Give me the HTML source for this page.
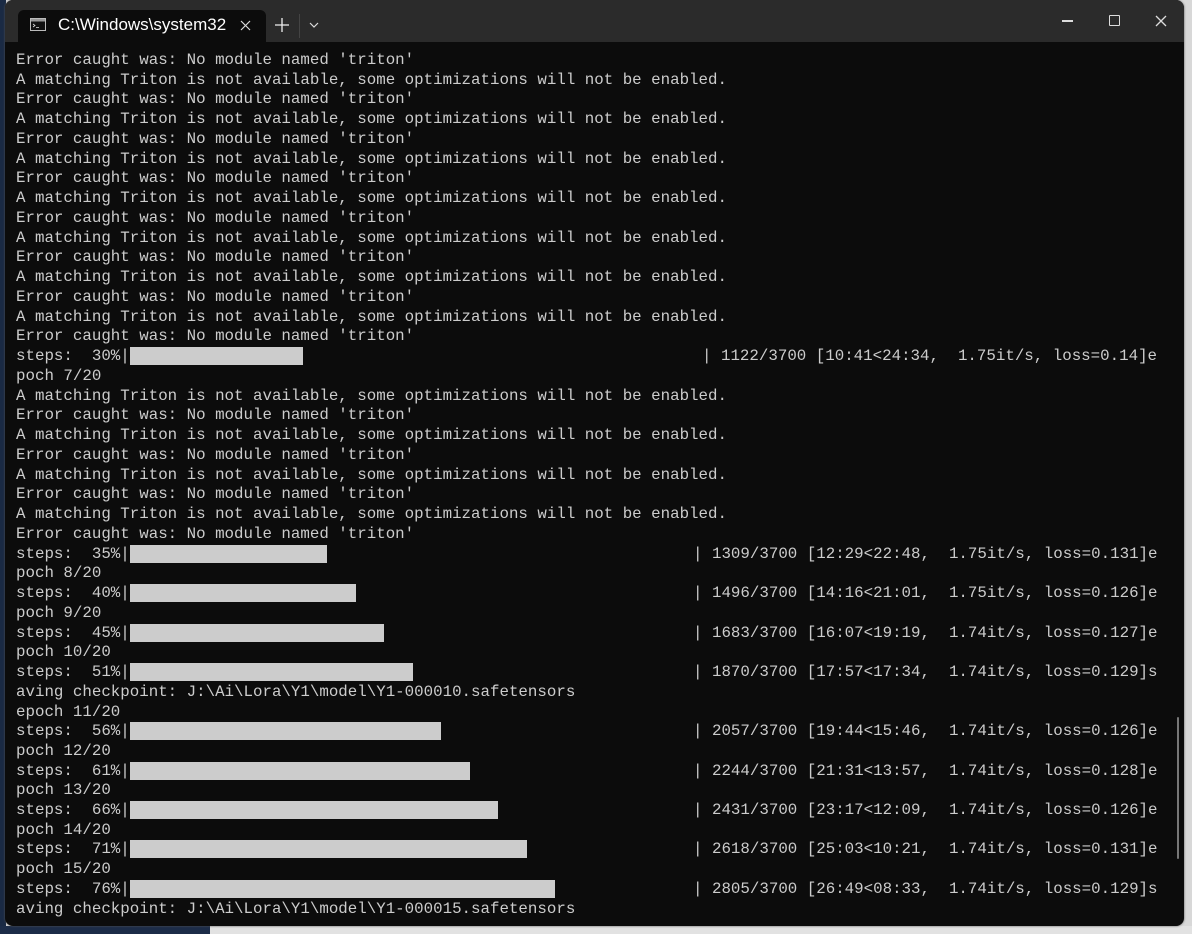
<!DOCTYPE html>
<html><head><meta charset="utf-8"><style>
html,body{margin:0;padding:0;width:1192px;height:934px;overflow:hidden;background:#d8d8d8;}
#bgb{position:absolute;left:0;top:0;width:6px;height:934px;background:#1a2a44;}
#bgbot{position:absolute;left:0;top:926px;width:210px;height:8px;background:#1c2c48;}
#bgbot2{position:absolute;left:210px;top:926px;width:990px;height:8px;background:#e2e2e2;}
#win{position:absolute;left:5px;top:0;width:1179px;height:926px;background:#0c0c0c;border-radius:8px;overflow:hidden;box-shadow:0 0 2px #555;}
#tb{position:absolute;left:0;top:0;width:100%;height:42px;background:#2b2b2b;}
#tab{position:absolute;left:13px;top:10px;width:248px;height:32px;background:#0c0c0c;border-radius:6px 6px 0 0;}
.t{position:absolute;font-family:"Liberation Sans",sans-serif;color:#fff;}
#lines{position:absolute;left:0;top:1px;}
.l{position:absolute;left:11px;font-family:"Liberation Mono",monospace;font-size:15.8px;color:#cccccc;white-space:pre;line-height:20px;}
.bar{position:absolute;left:125px;height:18px;background:#cccccc;}
</style></head><body>
<div id="bgb"></div><div id="bgbot"></div><div id="bgbot2"></div>
<div id="win">
<div id="tb">
 <div id="tab">
  <svg style="position:absolute;left:12px;top:8px" width="16" height="13"><rect x="0.5" y="0.5" width="15" height="12" fill="#111" stroke="#bbb"/><rect x="1" y="1" width="14" height="2.5" fill="#999"/><path d="M3 6l2 1.5-2 1.5M6 9.5h3" stroke="#ddd" fill="none" stroke-width="0.8"/></svg>
  <div class="t" style="left:40px;top:5px;font-size:17px;">C:\Windows\system32</div>
  <svg style="position:absolute;left:222px;top:10px" width="11" height="11"><path d="M1 1L10 10M10 1L1 10" stroke="#ddd" stroke-width="1.2"/></svg>
 </div>
 <svg style="position:absolute;left:270px;top:18px" width="14" height="14"><path d="M7 0V14M0 7H14" stroke="#eee" stroke-width="1.3"/></svg>
 <div style="position:absolute;left:294px;top:14px;width:1px;height:24px;background:#444"></div>
 <svg style="position:absolute;left:304px;top:22px" width="10" height="6"><path d="M1 1L5 5L9 1" stroke="#ddd" fill="none" stroke-width="1.2"/></svg>
 <div style="position:absolute;left:1057px;top:20px;width:11px;height:1.5px;background:#ddd"></div>
 <div style="position:absolute;left:1104px;top:15px;width:9px;height:9px;border:1.3px solid #ddd;border-radius:1px"></div>
 <svg style="position:absolute;left:1150px;top:15px" width="12" height="12"><path d="M1 1L11 11M11 1L1 11" stroke="#ddd" stroke-width="1.3"/></svg>
</div>
<div style="position:absolute;left:1172px;top:717px;width:2px;height:142px;background:#777;border-radius:1px"></div>
<div id="lines">
<div class="l" style="top:49px">Error caught was: No module named 'triton'</div>
<div class="l" style="top:69px">A matching Triton is not available, some optimizations will not be enabled.</div>
<div class="l" style="top:88px">Error caught was: No module named 'triton'</div>
<div class="l" style="top:108px">A matching Triton is not available, some optimizations will not be enabled.</div>
<div class="l" style="top:128px">Error caught was: No module named 'triton'</div>
<div class="l" style="top:148px">A matching Triton is not available, some optimizations will not be enabled.</div>
<div class="l" style="top:167px">Error caught was: No module named 'triton'</div>
<div class="l" style="top:187px">A matching Triton is not available, some optimizations will not be enabled.</div>
<div class="l" style="top:207px">Error caught was: No module named 'triton'</div>
<div class="l" style="top:227px">A matching Triton is not available, some optimizations will not be enabled.</div>
<div class="l" style="top:246px">Error caught was: No module named 'triton'</div>
<div class="l" style="top:266px">A matching Triton is not available, some optimizations will not be enabled.</div>
<div class="l" style="top:286px">Error caught was: No module named 'triton'</div>
<div class="l" style="top:306px">A matching Triton is not available, some optimizations will not be enabled.</div>
<div class="l" style="top:325px">Error caught was: No module named 'triton'</div>
<div class="l" style="top:345px">steps:  30%|</div><div class="bar" style="top:346px;width:173px"></div><div class="l" style="top:345px;left:697px">| 1122/3700 [10:41&lt;24:34,  1.75it/s, loss=0.14]e</div>
<div class="l" style="top:365px">poch 7/20</div>
<div class="l" style="top:385px">A matching Triton is not available, some optimizations will not be enabled.</div>
<div class="l" style="top:404px">Error caught was: No module named 'triton'</div>
<div class="l" style="top:424px">A matching Triton is not available, some optimizations will not be enabled.</div>
<div class="l" style="top:444px">Error caught was: No module named 'triton'</div>
<div class="l" style="top:464px">A matching Triton is not available, some optimizations will not be enabled.</div>
<div class="l" style="top:483px">Error caught was: No module named 'triton'</div>
<div class="l" style="top:503px">A matching Triton is not available, some optimizations will not be enabled.</div>
<div class="l" style="top:523px">Error caught was: No module named 'triton'</div>
<div class="l" style="top:543px">steps:  35%|</div><div class="bar" style="top:544px;width:197px"></div><div class="l" style="top:543px;left:688px">| 1309/3700 [12:29&lt;22:48,  1.75it/s, loss=0.131]e</div>
<div class="l" style="top:562px">poch 8/20</div>
<div class="l" style="top:582px">steps:  40%|</div><div class="bar" style="top:583px;width:226px"></div><div class="l" style="top:582px;left:688px">| 1496/3700 [14:16&lt;21:01,  1.75it/s, loss=0.126]e</div>
<div class="l" style="top:602px">poch 9/20</div>
<div class="l" style="top:622px">steps:  45%|</div><div class="bar" style="top:623px;width:254px"></div><div class="l" style="top:622px;left:688px">| 1683/3700 [16:07&lt;19:19,  1.74it/s, loss=0.127]e</div>
<div class="l" style="top:641px">poch 10/20</div>
<div class="l" style="top:661px">steps:  51%|</div><div class="bar" style="top:662px;width:283px"></div><div class="l" style="top:661px;left:688px">| 1870/3700 [17:57&lt;17:34,  1.74it/s, loss=0.129]s</div>
<div class="l" style="top:681px">aving checkpoint: J:\Ai\Lora\Y1\model\Y1-000010.safetensors</div>
<div class="l" style="top:701px">epoch 11/20</div>
<div class="l" style="top:720px">steps:  56%|</div><div class="bar" style="top:721px;width:311px"></div><div class="l" style="top:720px;left:688px">| 2057/3700 [19:44&lt;15:46,  1.74it/s, loss=0.126]e</div>
<div class="l" style="top:740px">poch 12/20</div>
<div class="l" style="top:760px">steps:  61%|</div><div class="bar" style="top:761px;width:340px"></div><div class="l" style="top:760px;left:688px">| 2244/3700 [21:31&lt;13:57,  1.74it/s, loss=0.128]e</div>
<div class="l" style="top:779px">poch 13/20</div>
<div class="l" style="top:799px">steps:  66%|</div><div class="bar" style="top:800px;width:368px"></div><div class="l" style="top:799px;left:688px">| 2431/3700 [23:17&lt;12:09,  1.74it/s, loss=0.126]e</div>
<div class="l" style="top:819px">poch 14/20</div>
<div class="l" style="top:838px">steps:  71%|</div><div class="bar" style="top:839px;width:397px"></div><div class="l" style="top:838px;left:688px">| 2618/3700 [25:03&lt;10:21,  1.74it/s, loss=0.131]e</div>
<div class="l" style="top:858px">poch 15/20</div>
<div class="l" style="top:878px">steps:  76%|</div><div class="bar" style="top:879px;width:425px"></div><div class="l" style="top:878px;left:688px">| 2805/3700 [26:49&lt;08:33,  1.74it/s, loss=0.129]s</div>
<div class="l" style="top:898px">aving checkpoint: J:\Ai\Lora\Y1\model\Y1-000015.safetensors</div>
</div>
</div>
</body></html>
